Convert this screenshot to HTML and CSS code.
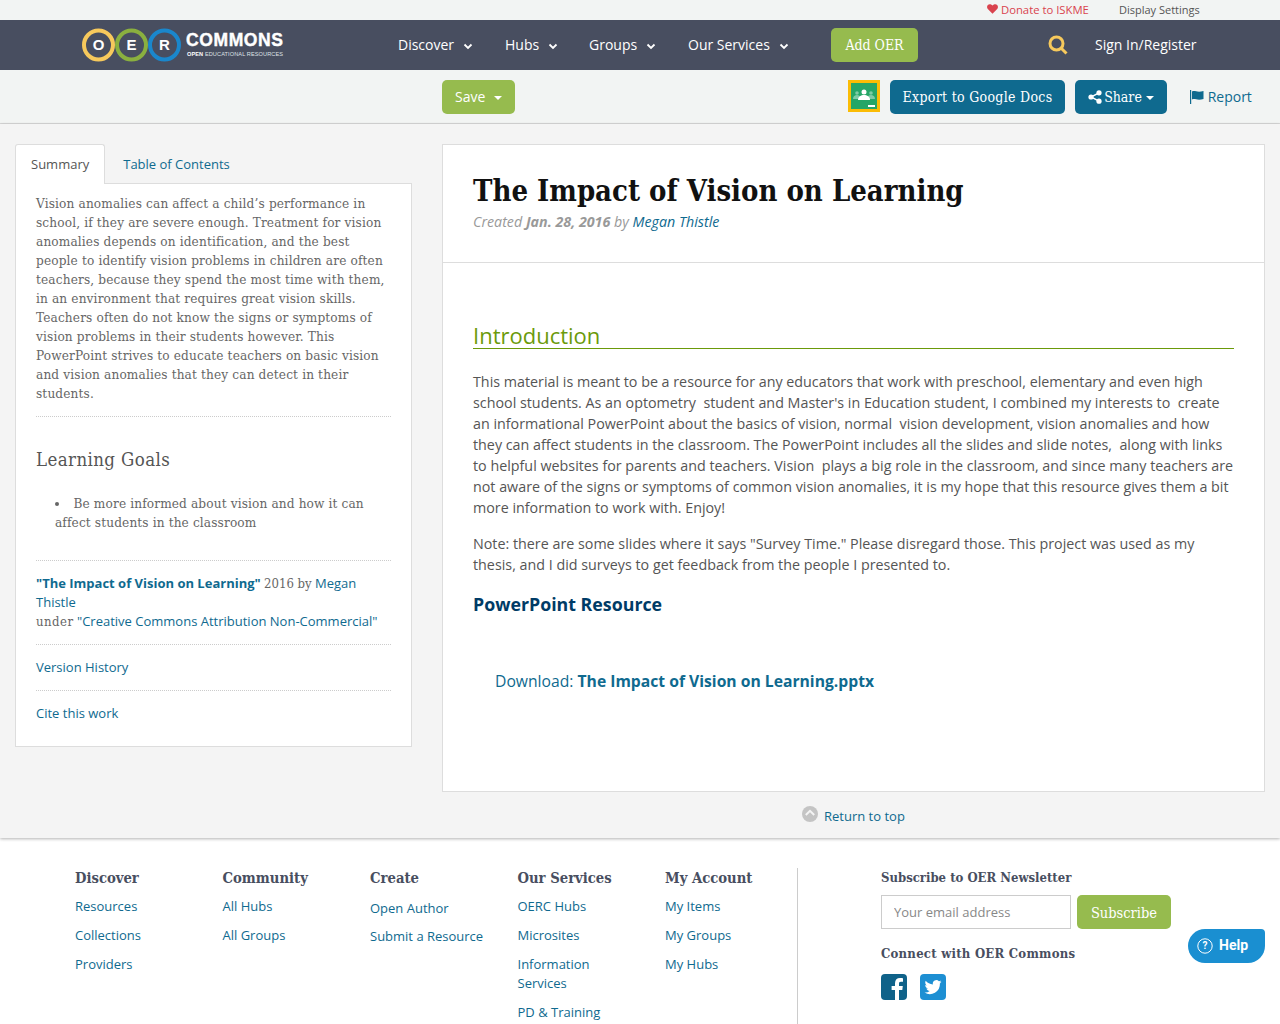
FILE: index.html
```html
<!DOCTYPE html>
<html lang="en">
<head>
    <meta charset="UTF-8">
    <title>The Impact of Vision on Learning</title>
    <link rel="stylesheet" href="styles.css">
</head>
<body>
    <div class="topbar">
        <a class="donate" href="#"><svg class="heart" viewBox="0 0 24 22"><path d="M12 21.500 2.200 11.600C-.7 8.600-.6 4.400 1.700 2.100 4.200-.4 8.600-.5 12 3.400c3.400-3.900 7.800-3.800 10.300-1.300 2.300 2.300 2.400 6.500-.5 9.500z"/></svg> Donate to ISKME</a>
        <a class="display" href="#">Display Settings</a>
    </div>

    <nav class="navbar">
        <a class="logo" href="#">
            <svg width="204" height="36" viewBox="0 0 204 36">
                <circle cx="16.500" cy="18" r="14.500" fill="#484e60" stroke="#f7c95c" stroke-width="4"/>
                <circle cx="49.500" cy="18" r="14.500" fill="#484e60" stroke="#8ab03f" stroke-width="4"/>
                <circle cx="82.500" cy="18" r="14.500" fill="#484e60" stroke="#1a87cc" stroke-width="4"/>
                <text x="16.500" y="23" class="logo-letter">O</text>
                <text x="49.500" y="23" class="logo-letter">E</text>
                <text x="82.500" y="23" class="logo-letter">R</text>
                <text x="104" y="19" class="logo-name" textLength="97">COMMONS</text>
                <text x="105" y="28.500" class="logo-sub" textLength="96"><tspan class="logo-open">OPEN</tspan> EDUCATIONAL RESOURCES</text>
            </svg>
        </a>
        <ul class="nav-menu">
            <li class="m-discover">Discover <svg class="chev" viewBox="0 0 10 7"><path d="M1.500 1.500 5 5l3.500-3.500"/></svg></li>
            <li class="m-hubs">Hubs <svg class="chev" viewBox="0 0 10 7"><path d="M1.500 1.500 5 5l3.500-3.500"/></svg></li>
            <li class="m-groups">Groups <svg class="chev" viewBox="0 0 10 7"><path d="M1.500 1.500 5 5l3.500-3.500"/></svg></li>
            <li class="m-services">Our Services <svg class="chev" viewBox="0 0 10 7"><path d="M1.500 1.500 5 5l3.500-3.500"/></svg></li>
        </ul>
        <a class="btn btn-green add-oer" href="#">Add OER</a>
        <svg class="search" viewBox="0 0 20 20"><circle cx="8.500" cy="8.500" r="6.500"/><path d="m13.500 13.500 5 5"/></svg>
        <a class="signin" href="#">Sign In/Register</a>
    </nav>

    <div class="subbar">
        <a class="btn btn-green save" href="#">Save <span class="caret"></span></a>
        <span class="classroom">
            <svg width="26" height="26" viewBox="0 0 26 26">
                <rect width="26" height="26" fill="#25a667"/>
                <rect x="17" y="22" width="7" height="2" fill="#fff"/>
                <circle cx="6" cy="10" r="1.800" fill="#7fcba5"/>
                <circle cx="20" cy="10" r="1.800" fill="#7fcba5"/>
                <path d="M2 16c0-3 2-4 4-4s4 1 4 4zM16 16c0-3 2-4 4-4s4 1 4 4z" fill="#7fcba5"/>
                <circle cx="13" cy="9" r="2.500" fill="#fff"/>
                <path d="M7 17c0-3.500 3-5 6-5s6 1.500 6 5z" fill="#fff"/>
            </svg>
        </span>
        <a class="btn btn-blue export" href="#">Export to Google Docs</a>
        <a class="btn btn-blue share" href="#"><svg class="share-ico" viewBox="0 0 14 14"><circle cx="11" cy="2.800" r="2.600"/><circle cx="11" cy="11.200" r="2.600"/><circle cx="3" cy="7" r="2.600"/><path d="M11 2.800 3 7l8 4.200" fill="none" stroke="#fff" stroke-width="1.500"/></svg>Share <span class="caret"></span></a>
        <a class="report" href="#"><svg class="flag" viewBox="0 0 15 14"><path d="M1 0h1.200v14H1z"/><path d="M3 1.500C6 0 8 3 14.500 1v8C8 11 6 8 3 9.500z"/></svg> Report</a>
    </div>

    <main class="page">
        <aside class="sidebar">
            <div class="tabs">
                <a class="tab active" href="#">Summary</a>
                <a class="tab" href="#">Table of Contents</a>
            </div>
            <div class="panel">
                <p class="summary">Vision anomalies can affect a child’s performance in<br>school, if they are severe enough. Treatment for vision<br>anomalies depends on identification, and the best<br>people to identify vision problems in children are often<br>teachers, because they spend the most time with them,<br>in an environment that requires great vision skills.<br>Teachers often do not know the signs or symptoms of<br>vision problems in their students however. This<br>PowerPoint strives to educate teachers on basic vision<br>and vision anomalies that they can detect in their<br>students.</p>
                <div class="goals">
                    <h3>Learning Goals</h3>
                    <ul>
                        <li>Be more informed about vision and how it can<br>affect students in the classroom</li>
                    </ul>
                </div>
                <div class="attrib">
                    <a href="#"><b>"The Impact of Vision on Learning"</b></a> <span class="slab">2016 by</span> <a href="#">Megan</a><br>
                    <a href="#">Thistle</a><br>
                    <span class="slab slab-under">under</span> <a href="#">"Creative Commons Attribution Non-Commercial"</a>
                </div>
                <div class="panel-link"><a href="#">Version History</a></div>
                <div class="panel-link"><a href="#">Cite this work</a></div>
            </div>
        </aside>

        <div class="content">
            <article class="article">
                <header class="article-head">
                    <h1>The Impact of Vision on Learning</h1>
                    <p class="meta">Created <b>Jan. 28, 2016</b> by <a href="#">Megan Thistle</a></p>
                </header>
                <div class="article-body">
                    <h2>Introduction</h2>
                    <p>This material is meant to be a resource for any educators that work with preschool, elementary and even high school students. As an optometry&nbsp; student and Master's in Education student, I combined my interests to&nbsp; create an informational PowerPoint about the basics of vision, normal&nbsp; vision development, vision anomalies and how they can affect students in the classroom. The PowerPoint includes all the slides and slide notes,&nbsp; along with links to helpful websites for parents and teachers. Vision&nbsp; plays a big role in the classroom, and since many teachers are not aware of the signs or symptoms of common vision anomalies, it is my hope that this resource gives them a bit more information to work with. Enjoy!</p>
                    <p>Note: there are some slides where it says "Survey Time." Please disregard those. This project was used as my thesis, and I did surveys to get feedback from the people I presented to.</p>
                    <h4>PowerPoint Resource</h4>
                    <p class="download"><a href="#">Download: <b>The Impact of Vision on Learning.pptx</b></a></p>
                </div>
            </article>
            <a class="to-top" href="#"><svg class="up" viewBox="0 0 16 16"><circle cx="8" cy="8" r="8"/><path d="M3.800 9 8 4.800 12.200 9"/></svg>Return to top</a>
        </div>
    </main>

    <footer class="footer">
        <div class="foot-cols">
            <div class="foot-col">
                <h5>Discover</h5>
                <a href="#">Resources</a>
                <a href="#">Collections</a>
                <a href="#">Providers</a>
            </div>
            <div class="foot-col">
                <h5>Community</h5>
                <a href="#">All Hubs</a>
                <a href="#">All Groups</a>
            </div>
            <div class="foot-col foot-create">
                <h5>Create</h5>
                <a href="#">Open Author</a>
                <a href="#">Submit a Resource</a>
            </div>
            <div class="foot-col">
                <h5>Our Services</h5>
                <a href="#">OERC Hubs</a>
                <a href="#">Microsites</a>
                <a href="#">Information Services</a>
                <a href="#">PD &amp; Training</a>
            </div>
            <div class="foot-col">
                <h5>My Account</h5>
                <a href="#">My Items</a>
                <a href="#">My Groups</a>
                <a href="#">My Hubs</a>
            </div>
        </div>
        <div class="foot-side">
            <h5>Subscribe to OER Newsletter</h5>
            <form class="subscribe" action="#" onsubmit="return false;">
                <input type="text" placeholder="Your email address">
                <button class="btn btn-green" type="button">Subscribe</button>
            </form>
            <h5 class="connect">Connect with OER Commons</h5>
            <div class="social">
                <svg width="26" height="26" viewBox="0 0 26 26"><rect width="26" height="26" rx="4" fill="#0f6289"/><path d="M18 26V16h3.300l.5-4H18V9.700c0-1.200.4-1.900 2-1.900h2V4.300C21.500 4.200 20.400 4 19 4c-3 0-5 1.800-5 5.200V12h-3.400v4H14v10z" fill="#fff"/></svg>
                <svg width="26" height="26" viewBox="0 0 26 26"><rect width="26" height="26" rx="4" fill="#1d8fd3"/><path d="M21.500 7.800c-.7.300-1.300.5-2 .6.700-.5 1.300-1.100 1.600-2-.7.400-1.400.7-2.200.9a3.500 3.500 0 0 0-6 3.200c-2.900-.2-5.500-1.600-7.200-3.700-.9 1.600-.5 3.700 1.100 4.700-.6 0-1.100-.2-1.600-.4 0 1.700 1.200 3.100 2.800 3.500-.5.100-1 .1-1.600 0 .5 1.400 1.800 2.400 3.300 2.400A7.100 7.100 0 0 1 4.500 18.500a10 10 0 0 0 15.400-8.900c.6-.5 1.200-1.100 1.600-1.800z" fill="#fff"/></svg>
            </div>
        </div>
    </footer>

    <a class="help" href="#"><svg class="help-ico" viewBox="0 0 16 16"><circle cx="8" cy="8" r="7.200"/></svg><span class="help-q">?</span>Help</a>
</body>
</html>
```

FILE: styles.css
```css
* {
    box-sizing: border-box;
}
html, body {
    margin: 0;
    padding: 0;
}
body {
    height: 1024px;
    overflow: hidden;
    position: relative;
    font-family: "Open Sans", Arial, sans-serif;
    font-size: 13px;
    color: #555;
    background-color: #fff;
}
a {
    color: #0f6a8f;
    text-decoration: none;
}

/* top strip */
.topbar {
    height: 20px;
    display: flex;
    align-items: center;
    padding: 0 0 2px 987px;
    background-color: #f2f4f3;
    font-size: 11px;
}
.donate {
    color: #d9434e;
    width: 132px;
    font-size: 11.300px;
}
.heart {
    width: 11px;
    height: 10px;
    fill: #d9434e;
}
.display {
    color: #555;
}

/* main nav */
.navbar {
    height: 50px;
    display: flex;
    align-items: center;
    background-color: #484e60;
    padding-left: 82px;
}
.logo {
    display: block;
    height: 36px;
    width: 204px;
}
.logo-letter {
    font: bold 15px "Liberation Sans", Arial, sans-serif;
    fill: #fff;
    text-anchor: middle;
}
.logo-name {
    font: bold 17.500px "Liberation Sans", Arial, sans-serif;
    fill: #fff;
    stroke: #fff;
    stroke-width: .4;
}
.logo-sub {
    font: 5.600px "Liberation Sans", Arial, sans-serif;
    fill: #dfe1e6;
}
.logo-open {
    font-weight: bold;
    fill: #fff;
}
.nav-menu {
    list-style: none;
    display: flex;
    margin: 0 0 0 112px;
    padding: 0 0 2px;
    color: #fff;
    font-size: 14px;
}
.nav-menu li {
    white-space: nowrap;
}
.m-discover { width: 107px; }
.m-hubs { width: 84px; }
.m-groups { width: 99px; }
.m-services { width: 143px; }
.chev {
    width: 10px;
    height: 7px;
    margin-left: 5px;
    fill: none;
    stroke: #fff;
    stroke-width: 1.800;
}
.btn {
    display: inline-block;
    border: none;
    border-radius: 5px;
    color: #fff;
    font-family: "DejaVu Serif", serif;
    font-stretch: condensed;
    font-size: 14px;
    height: 34px;
    line-height: 34px;
    text-align: center;
    white-space: nowrap;
}
.btn-green {
    background-color: #96bb4e;
}
.btn-blue {
    background-color: #0f6a8f;
}
.add-oer {
    width: 87px;
}
.search {
    width: 20px;
    height: 20px;
    margin-left: 130px;
    fill: none;
    stroke: #f7c95c;
    stroke-width: 3;
}
.signin {
    margin-left: 27px;
    padding-bottom: 2px;
    color: #fff;
    font-size: 14px;
}

/* action bar */
.subbar {
    height: 54px;
    display: flex;
    align-items: flex-start;
    padding: 10px 0 0 442px;
    background-color: #f2f4f3;
    border-bottom: 1px solid #d9d9d9;
}
.save {
    width: 73px;
    font-family: "Open Sans", Arial, sans-serif;
    font-stretch: normal;
    font-size: 14px;
}
.caret {
    display: inline-block;
    margin-left: 5px;
    vertical-align: middle;
    border-top: 4px solid #fff;
    border-left: 4px solid transparent;
    border-right: 4px solid transparent;
}
.classroom {
    display: block;
    width: 32px;
    height: 32px;
    margin-left: 333px;
    border: 3px solid #fbbc05;
}
.classroom svg {
    display: block;
}
.export {
    width: 175px;
    margin-left: 10px;
    letter-spacing: .3px;
}
.share {
    width: 92px;
    margin-left: 10px;
}
.share .caret {
    margin-left: 0;
}
.share-ico {
    width: 14px;
    height: 14px;
    fill: #fff;
    margin-right: 2px;
    vertical-align: -2px;
}
.report {
    margin-left: 22px;
    line-height: 34px;
    font-size: 14px;
}
.flag {
    width: 15px;
    height: 14px;
    fill: #0f6a8f;
    vertical-align: -2px;
}

/* page body */
.page {
    height: 714px;
    display: flex;
    align-items: flex-start;
    padding: 20px 15px 0;
    background-color: #f4f4f4;
    box-shadow: 0 1px 3px rgba(0, 0, 0, .3);
    position: relative;
}
.sidebar {
    width: 397px;
}
.tabs {
    display: flex;
    height: 40px;
}
.tab {
    padding: 11px 15px 0;
    height: 40px;
}
.tab + .tab {
    margin-left: 3px;
}
.tab.active {
    padding-top: 10px;
    color: #555;
    background-color: #fff;
    border: 1px solid #ddd;
    border-bottom: none;
    border-radius: 3px 3px 0 0;
    position: relative;
    z-index: 1;
}
.panel {
    margin-top: -1px;
    height: 564px;
    padding: 10px 20px 0;
    background-color: #fff;
    border: 1px solid #ddd;
}
.summary {
    margin: 0;
    padding-bottom: 13px;
    border-bottom: 1px dotted #ccc;
    font-family: "DejaVu Serif", serif;
    font-stretch: condensed;
    font-size: 13.500px;
    letter-spacing: .14px;
    line-height: 19px;
    color: #666;
}
.goals {
    height: 144px;
    border-bottom: 1px dotted #ccc;
    font-family: "DejaVu Serif", serif;
    font-stretch: condensed;
    color: #666;
}
.goals h3 {
    margin: 0;
    padding-top: 31px;
    font-weight: normal;
    font-size: 18.500px;
    letter-spacing: .4px;
    line-height: 24px;
    color: #555;
}
.goals ul {
    margin: 22px 0 0;
    padding: 0 0 0 19px;
    font-size: 13.500px;
    letter-spacing: .13px;
    line-height: 19px;
    list-style-position: inside;
}
.attrib {
    padding: 13px 0;
    border-bottom: 1px dotted #ccc;
    line-height: 19px;
}
.slab {
    font-family: "DejaVu Serif", serif;
    font-stretch: condensed;
    color: #666;
}
.slab-under {
    letter-spacing: .5px;
}
.panel-link {
    height: 45px;
    padding-top: 13px;
    line-height: 19px;
}
.panel-link + .panel-link {
    border-top: 1px dotted #ccc;
}
.content {
    width: 823px;
    margin-left: 30px;
}
.article {
    height: 648px;
    background-color: #fff;
    border: 1px solid #ddd;
}
.article-head {
    height: 118px;
    padding: 28px 30px 0;
    border-bottom: 1px solid #ddd;
}
h1 {
    margin: 0;
    font-family: "DejaVu Serif", serif;
    font-stretch: condensed;
    font-size: 29px;
    line-height: 36px;
    font-weight: bold;
    color: #111;
}
.meta {
    margin: 3px 0 0;
    font-size: 14.250px;
    font-style: italic;
    line-height: 19px;
    color: #999;
}
.article-body {
    padding: 59px 30px 0;
    font-size: 14.300px;
    line-height: 21px;
    color: #555;
}
.article-body h2 {
    margin: 0 0 22px;
    font-size: 22px;
    line-height: 26px;
    font-weight: normal;
    color: #6b9a0a;
    border-bottom: 1px solid #6b9a0a;
}
.article-body p {
    margin: 0 0 15px;
}
.article-body h4 {
    margin: 17px 0 0;
    font-size: 17.800px;
    line-height: 24px;
    color: #003b66;
}
.article-body .download {
    margin: 55px 0 0 22px;
    font-size: 15.700px;
}
.to-top {
    display: block;
    margin: 14px 0 0 360px;
    line-height: 19px;
}
.up {
    width: 16px;
    height: 16px;
    margin-right: 6px;
    vertical-align: -1px;
    fill: #c4c4c4;
}
.up path {
    fill: none;
    stroke: #f4f4f4;
    stroke-width: 2;
}

/* footer */
.footer {
    display: flex;
    padding: 30px 0 0 75px;
    background-color: #fff;
    height: 187px;
    overflow: hidden;
}
.foot-cols {
    display: grid;
    grid-template-columns: repeat(4, 147.500px) 1fr;
    width: 723px;
    height: 157px;
    border-right: 1px solid #ccc;
}
.foot-col {
    padding-right: 28px;
}
.foot-col a {
    display: block;
    margin-top: 10px;
    line-height: 19px;
}
.foot-col h5 + a {
    margin-top: 9px;
}
.foot-create a {
    margin-top: 9px;
}
.foot-create h5 + a {
    margin-top: 11px;
}
h5 {
    margin: 0;
    font-family: "DejaVu Serif", serif;
    font-stretch: condensed;
    font-size: 14.700px;
    line-height: 20px;
    font-weight: bold;
    color: #484e60;
}
.foot-side {
    margin-left: 83px;
}
.foot-side h5 {
    font-size: 13px;
}
.subscribe {
    display: flex;
    gap: 6px;
    margin-top: 7px;
}
.subscribe input {
    width: 190px;
    height: 34px;
    padding: 0 12px;
    border: 1px solid #ccc;
    font-family: "Open Sans", Arial, sans-serif;
    font-size: 13px;
    color: #555;
}
.subscribe input::placeholder {
    color: #888;
}
.subscribe .btn {
    width: 94px;
    font-size: 14.500px;
}
.foot-side .connect {
    margin-top: 15px;
    letter-spacing: .25px;
}
.social {
    display: flex;
    gap: 13px;
    margin-top: 10px;
}

/* floating help */
.help {
    position: absolute;
    left: 1188px;
    top: 929px;
    width: 77px;
    height: 34px;
    padding-left: 31px;
    border-radius: 17px 4px 17px 17px;
    background-color: #1a8fd1;
    color: #fff;
    font: bold 14px/33px Roboto, Arial, sans-serif;
}
.help-ico {
    position: absolute;
    left: 9px;
    top: 9px;
    width: 16px;
    height: 16px;
    fill: none;
    stroke: #fff;
    stroke-width: 1;
}
.help-q {
    position: absolute;
    left: 9px;
    top: 9px;
    width: 16px;
    text-align: center;
    font-size: 10px;
    line-height: 16px;
}
```
